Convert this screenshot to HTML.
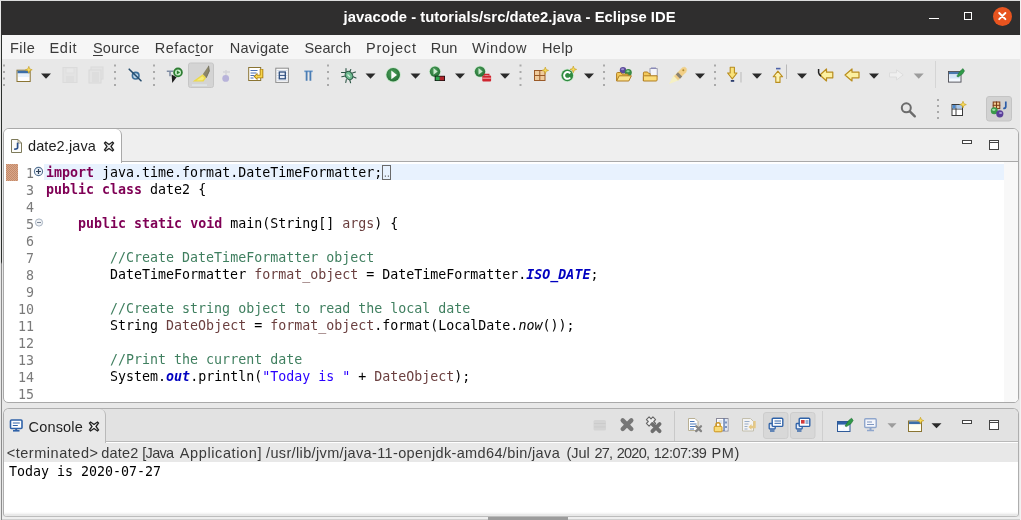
<!DOCTYPE html>
<html><head><meta charset="utf-8"><title>javacode - tutorials/src/date2.java - Eclipse IDE</title>
<style>
*{box-sizing:border-box;margin:0;padding:0}
html,body{width:1021px;height:520px;overflow:hidden;background:#e8e8e8;-webkit-font-smoothing:antialiased;font-family:"Liberation Sans","DejaVu Sans",sans-serif;}
#root{position:absolute;left:0;top:0;width:1021px;height:520px;will-change:transform}
.abs{position:absolute}
#title{position:absolute;left:1px;top:1px;width:1019px;height:34px;background:#2f2e2e;color:#fff;font-weight:bold;font-size:14.8px;text-align:center;line-height:33px;white-space:nowrap}
#title span{position:absolute;left:342.500px;top:0;letter-spacing:.03px}
#lefte{position:absolute;left:1px;top:35px;width:1px;height:485px;background:linear-gradient(#2c302d 0,#2c302d 227px,#8c8c8c 229px,#8c8c8c 100%)}
#righte{position:absolute;left:1020px;top:0;width:1px;height:520px;background:#f2f2f2}
#tope{position:absolute;left:0;top:0;width:1021px;height:1px;background:#dcdcdc}
#menu{position:absolute;left:2px;top:35px;width:1018px;height:24px;background:#f6f6f6;font-size:14.5px;color:#3a3a3a;}
#menu span{position:absolute;top:1px;line-height:25px;white-space:nowrap}
u{text-decoration:underline;text-underline-offset:2px;text-decoration-thickness:1px}
.mono{font-family:"DejaVu Sans Mono","Liberation Mono",monospace;font-size:13.31px;white-space:pre}
#edpanel{position:absolute;left:3px;top:128px;width:1016px;height:275px;background:#fff;border:1px solid #a9a9a9;border-radius:6px 6px 5px 5px;overflow:hidden}
#edhead{position:absolute;left:0;top:0;width:100%;height:33px;background:#efefef;border-bottom:1px solid #a9a9a9}
#edtab{position:absolute;left:0px;top:0px;width:118px;height:34px;background:#fff;border-right:1px solid #a9a9a9;border-radius:5px 6px 0 0;font-size:14.5px;color:#1e1e1e}
.ln{position:absolute;left:0;width:1000px;height:17px;line-height:17px}
.ln .n{position:absolute;left:0;top:.6px;width:30px;text-align:right;color:#7a7a7a}
.ln .c{position:absolute;left:42px;color:#000}
.k{color:#7f0055;font-weight:bold}
.cm{color:#3f7f5f}
.v{color:#6a3e3e}
.s{color:#2a00ff}
.sf{color:#0000c0;font-weight:bold;font-style:italic}
.i{font-style:italic}
#conpanel{position:absolute;left:3px;top:408px;width:1016px;height:109px;background:#fff;border:1px solid #aeaeae;border-bottom-color:#bcbcbc;border-radius:6px 6px 4px 4px;overflow:hidden}
#conhead{position:absolute;left:0;top:0;width:100%;height:33px;background:#e2e2e2;border-bottom:1px solid #b9b9b9}
#contab{position:absolute;left:0;top:0;width:102px;height:34px;background:#e8e8e8;border-right:1px solid #b9b9b9;border-radius:5px 6px 0 0;font-size:14.5px;color:#1e1e1e}
#condesc{position:absolute;left:0;top:34px;width:100%;height:19px;background:#e8e8e8;font-size:14.5px;color:#3a3a3a;line-height:19px;white-space:nowrap}
#condesc span{position:absolute;top:1px;white-space:pre}
#icons{position:absolute;left:0;top:0;width:1021px;height:520px;pointer-events:none}
</style></head><body><div id="root">
<div id="tope"></div>
<div id="title"><span>javacode - tutorials/src/date2.java - Eclipse IDE</span></div>
<div class="abs" style="left:929px;top:17.500px;width:9.500px;height:1.500px;background:#fff"></div>
<div class="abs" style="left:963.700px;top:11.700px;width:8.600px;height:8.600px;border:1.500px solid #fff"></div>
<div class="abs" style="left:992.800px;top:6.600px;width:19px;height:19px;border-radius:10px;background:#e8541f"></div>
<div id="lefte"></div><div id="righte"></div>
<div id="menu">
<span style="left:8px;letter-spacing:.5px">File</span><span style="left:47.500px;letter-spacing:.7px">Edit</span><span style="left:91px;letter-spacing:.1px"><u>S</u>ource</span><span style="left:152.700px;letter-spacing:.55px">Refac<u>t</u>or</span><span style="left:227.700px;letter-spacing:.3px">Navigate</span><span style="left:302.500px;letter-spacing:.1px">Search</span><span style="left:364px;letter-spacing:.8px">Project</span><span style="left:428.700px">Run</span><span style="left:470px;letter-spacing:.6px">Window</span><span style="left:540px;letter-spacing:.3px">Help</span>
</div>
<div id="edpanel">
 <div id="edhead"></div>
 <div id="edtab"><span class="abs" style="left:24px;top:8.500px;letter-spacing:.1px">date2.java</span></div>
 <div id="code" class="mono" style="position:absolute;left:0;top:33px;width:100%;height:243px">
  <div class="abs" style="left:1000px;top:0;width:14px;height:243px;background:#f8f8f8"></div>
  <div class="abs" style="left:14px;top:2px;width:986px;height:16px;background:#e8f2fe"></div>
  <div class="abs" style="left:14px;top:2px;width:26px;height:17px;background:#fff"></div>
  <div class="ln" style="top:2px"><span class="n">1</span><span class="c"><span class="k">import</span> java.time.format.DateTimeFormatter;</span></div>
  <div class="ln" style="top:19px"><span class="n">3</span><span class="c"><span class="k">public</span> <span class="k">class</span> date2 {</span></div>
  <div class="ln" style="top:36px"><span class="n">4</span></div>
  <div class="ln" style="top:53px"><span class="n">5</span><span class="c">    <span class="k">public</span> <span class="k">static</span> <span class="k">void</span> main(String[] <span class="v">args</span>) {</span></div>
  <div class="ln" style="top:70px"><span class="n">6</span></div>
  <div class="ln" style="top:87px"><span class="n">7</span><span class="c">        <span class="cm">//Create DateTimeFormatter object</span></span></div>
  <div class="ln" style="top:104px"><span class="n">8</span><span class="c">        DateTimeFormatter <span class="v">format_object</span> = DateTimeFormatter.<span class="sf">ISO_DATE</span>;</span></div>
  <div class="ln" style="top:121px"><span class="n">9</span></div>
  <div class="ln" style="top:138px"><span class="n">10</span><span class="c">        <span class="cm">//Create string object to read the local date</span></span></div>
  <div class="ln" style="top:155px"><span class="n">11</span><span class="c">        String <span class="v">DateObject</span> = <span class="v">format_object</span>.format(LocalDate.<span class="i">now</span>());</span></div>
  <div class="ln" style="top:172px"><span class="n">12</span></div>
  <div class="ln" style="top:189px"><span class="n">13</span><span class="c">        <span class="cm">//Print the current date</span></span></div>
  <div class="ln" style="top:206px"><span class="n">14</span><span class="c">        System.<span class="sf">out</span>.println(<span class="s">"Today is "</span> + <span class="v">DateObject</span>);</span></div>
  <div class="ln" style="top:223px"><span class="n">15</span></div>
 </div>
</div>
<div id="conpanel">
 <div id="conhead"></div>
 <div id="contab"><span class="abs" style="left:24.600px;top:9.500px;letter-spacing:.15px">Console</span></div>
 <div id="condesc"><span style="left:2.7px;letter-spacing:0.53px">&lt;terminated&gt; </span><span style="left:97.2px;letter-spacing:0.24px">date2 </span><span style="left:138.3px;letter-spacing:-0.72px">[Java </span><span style="left:175.8px;letter-spacing:0.61px">Application] </span><span style="left:262.0px;letter-spacing:0.36px">/usr/lib/jvm/java-11-openjdk-amd64/bin/java </span><span style="left:562.5px;letter-spacing:-0.01px">(Jul </span><span style="left:590.4px;letter-spacing:-0.76px">27, </span><span style="left:612.7px;letter-spacing:-0.74px">2020, </span><span style="left:649.7px;letter-spacing:-0.47px">12:07:39 </span><span style="left:707.4px;letter-spacing:0.62px">PM)</span></div>
 <div class="abs" style="left:0;top:105px;width:100%;height:2px;background:#e9e9e9"></div>
 <div class="abs" style="left:0;top:103px;width:100%;height:2px;background:linear-gradient(#fff,#f2f2f2)"></div>
 <div class="mono abs" style="left:5px;top:54px;line-height:17px;color:#000">Today is 2020-07-27</div>
</div>
<div class="abs" style="left:2px;top:517px;width:1018px;height:2px;background:#eeeeee"></div><div class="abs" style="left:2px;top:519px;width:1018px;height:1px;background:#cfcfcf"></div>
<div class="abs" style="left:488px;top:517px;width:80px;height:3px;background:#9c9c9c"></div>
<svg id="icons" viewBox="0 0 1021 520" width="1021" height="520">
<path d="M999.200 13l6.200 6.200M1005.400 13l-6.200 6.200" stroke="#fff" stroke-width="1.900" stroke-linecap="round"/>
<defs><radialGradient id="gg" cx=".45" cy=".4" r=".6"><stop offset="0" stop-color="#4fa45e"/><stop offset="1" stop-color="#256f35"/></radialGradient></defs>
<rect x="3" y="64.5" width="2" height="2" fill="#a9a9a9"/><rect x="3" y="71" width="2" height="2" fill="#a9a9a9"/><rect x="3" y="77.5" width="2" height="2" fill="#a9a9a9"/><rect x="3" y="84" width="2" height="2" fill="#a9a9a9"/>
<rect x="17" y="70.2" width="13.2" height="11.3" fill="#fdfdfd" stroke="#8a7433" stroke-width="1"/>
<rect x="17.5" y="70.7" width="12.2" height="2.6" fill="#3a6ea8"/>
<rect x="18" y="74" width="11" height="3" fill="#dbe9f8" opacity=".7"/>
<polygon points="28.80,66.40 29.72,68.88 32.20,69.80 29.72,70.72 28.80,73.20 27.88,70.72 25.40,69.80 27.88,68.88" fill="#f8dc5a" stroke="#c9a227" stroke-width="0.7"/>
<path d="M41.0 73.5h10l-5.0 5.2z" fill="#2a2a2a"/>
<g opacity=".55"><rect x="63" y="67.5" width="14" height="15" fill="#dedede" stroke="#cfcfcf"/><rect x="66" y="68" width="8" height="5" fill="#e6e6e6" stroke="#d0d0d0" stroke-width=".6"/><rect x="66" y="76" width="8" height="6" fill="#d6d6d6"/></g>
<g opacity=".55"><rect x="91" y="67" width="12" height="12" fill="#dedede" stroke="#cfcfcf"/><rect x="89" y="70" width="12" height="13" fill="#dedede" stroke="#cccccc"/><rect x="92" y="72" width="7" height="10" fill="#d4d4d4"/></g>
<rect x="114" y="64.5" width="2" height="2" fill="#a9a9a9"/><rect x="114" y="71" width="2" height="2" fill="#a9a9a9"/><rect x="114" y="77.5" width="2" height="2" fill="#a9a9a9"/><rect x="114" y="84" width="2" height="2" fill="#a9a9a9"/>
<circle cx="135.7" cy="75.7" r="3.3" fill="#b9d5ea" stroke="#3b6f99" stroke-width="1.6"/>
<path d="M129.2 69.2L141 80.8" stroke="#274e6e" stroke-width="1.6" stroke-linecap="round"/>
<rect x="153" y="64.5" width="2" height="2" fill="#a9a9a9"/><rect x="153" y="71" width="2" height="2" fill="#a9a9a9"/><rect x="153" y="77.5" width="2" height="2" fill="#a9a9a9"/><rect x="153" y="84" width="2" height="2" fill="#a9a9a9"/>
<path d="M166.8 71.3h6.5M170 71.3v5" stroke="#7f8ca3" stroke-width="1.6" fill="none"/>
<path d="M171.6 74.5L172.2 83L176.6 77.2z" fill="#1d1d1d"/>
<circle cx="178" cy="72.4" r="3.9" fill="#c9efc9" stroke="#2e7d32" stroke-width="1.8"/>
<path d="M176.8 70.3l3.3 2.1l-3.3 2.1z" fill="#2e7d32"/>
<rect x="188.5" y="63" width="25" height="24.5" rx="2" fill="#d4d4d4" stroke="#c6c6c6"/>
<path d="M208.600 65.800L202.800 74.200L206.200 77.800L209.300 71z" fill="#8b8668"/>
<path d="M202.800 74.200L192.600 81.600L203.500 81.400L206.200 77.800z" fill="#ecd94a"/>
<path d="M202.300 76.300L196.500 80.600L202.500 80.300L204.300 78z" fill="#f7ec7a"/>
<path d="M208.600 65.800L209.300 71L206.200 77.800" stroke="#6d6a58" stroke-width=".9" fill="none"/>
<rect x="192" y="84.200" width="15" height="1.800" fill="#dfe6ea" opacity=".8"/>
<circle cx="225.7" cy="78.4" r="3.4" fill="#b8b3da"/>
<path d="M223 72h7M226 70v5" stroke="#d4d4d8" stroke-width="1.5"/>
<rect x="248.7" y="67.5" width="12" height="13" fill="#fff" stroke="#8a7433"/>
<path d="M250.5 70.5h7M250.5 73h6M250.5 75.5h4M250.5 78h3" stroke="#4a6fb3" stroke-width="1.2"/>
<path d="M261.5 69v7.5h-5" stroke="#a97c12" stroke-width="3.6" fill="none"/><path d="M257.5 72.8L253.5 76.5L257.5 80.2z" fill="#a97c12"/>
<path d="M261.5 69.6v6.9h-5" stroke="#f7d54a" stroke-width="1.8" fill="none"/><path d="M257 74.4L254.8 76.5L257 78.6z" fill="#f7d54a"/>
<rect x="275.8" y="68.2" width="12.6" height="14.2" fill="#fbfbfb" stroke="#8c8c8c"/>
<path d="M276.5 70.5h11M276.5 73h11M276.5 75.5h11M276.5 78h11M276.5 80.3h11" stroke="#c9d3e2" stroke-width=".8"/>
<rect x="279.3" y="72" width="6" height="6.8" fill="#e8eef8" stroke="#2f4f7f" stroke-width="1.3"/><path d="M279.5 75.4h5.6" stroke="#2f4f7f" stroke-width="1"/>
<path d="M304.300 71.300h8.400" stroke="#6f9ccc" stroke-width="1.700"/><path d="M306.600 71v9.800M310.400 71v9.800" stroke="#4b7db4" stroke-width="1.800"/>
<rect x="327" y="64.5" width="2" height="2" fill="#a9a9a9"/><rect x="327" y="71" width="2" height="2" fill="#a9a9a9"/><rect x="327" y="77.5" width="2" height="2" fill="#a9a9a9"/><rect x="327" y="84" width="2" height="2" fill="#a9a9a9"/>
<g stroke="#2b5444" stroke-width="1.100" stroke-linecap="round"><path d="M346 68.5v4M350.8 69.5l-1.5 3M341.5 72.5h4M341.8 76.8l3.5-.8M352.5 73l3-1M352.5 76.5l3.5 1.5M346.3 79.5l-.5 3M349.8 80l.8 2.8"/></g>
<ellipse cx="349" cy="75.5" rx="3.5" ry="4.4" transform="rotate(-35 349 75.5)" fill="#6fba90" stroke="#2a5a44" stroke-width="1.100"/>
<path d="M347.5 74.5l2.5 2.5" stroke="#d4f0dd" stroke-width="1.2"/>
<path d="M365.5 73.5h10l-5.0 5.2z" fill="#2a2a2a"/>
<circle cx="393.2" cy="74.8" r="7.6" fill="#c4e6c8"/><circle cx="393.200" cy="74.800" r="6.800" fill="url(#gg)"/>
<path d="M391.300 70.600L397 74.900L391.300 79.200z" fill="#fbfbfb"/>
<path d="M410.5 73.5h10l-5.0 5.2z" fill="#2a2a2a"/>
<circle cx="435" cy="71.6" r="5.9" fill="#c4e6c8"/><circle cx="435" cy="71.6" r="5.200" fill="url(#gg)"/><path d="M433.5 68l4.200 3.400l-4.200 3.400z" fill="#d8f0da" opacity=".9"/>
<rect x="434.7" y="75.8" width="10.3" height="5.2" fill="#111"/><rect x="435.6" y="76.5" width="4.2" height="3.8" fill="#2fa84f"/><rect x="439.8" y="76.5" width="4.4" height="3.8" fill="#b0262b"/>
<path d="M455.0 73.5h10l-5.0 5.2z" fill="#2a2a2a"/>
<circle cx="480" cy="71.6" r="5.9" fill="#c4e6c8"/><circle cx="480" cy="71.6" r="5.200" fill="url(#gg)"/><path d="M478.5 68l4.200 3.400l-4.200 3.400z" fill="#d8f0da" opacity=".9"/>
<rect x="482.3" y="75.4" width="8.8" height="6" rx="1" fill="#cf2630"/><path d="M484.5 75.5v-1.2h4.4v1.2" stroke="#cf2630" stroke-width="1.2" fill="none"/><path d="M482.5 78.2h8.4" stroke="#f3b0b0" stroke-width="1"/>
<path d="M500.0 73.5h10l-5.0 5.2z" fill="#2a2a2a"/>
<rect x="519.5" y="64.5" width="2" height="2" fill="#a9a9a9"/><rect x="519.5" y="71" width="2" height="2" fill="#a9a9a9"/><rect x="519.5" y="77.5" width="2" height="2" fill="#a9a9a9"/><rect x="519.5" y="84" width="2" height="2" fill="#a9a9a9"/>
<rect x="534.5" y="70.5" width="10.5" height="10" fill="#efcb9c" stroke="#9a5a28" stroke-width="1"/><path d="M539.800 70.500v10M534.500 75.500h10.500" stroke="#9a5a28" stroke-width="1"/>
<polygon points="545.30,67.10 546.15,69.55 548.60,70.40 546.15,71.25 545.30,73.70 544.45,71.25 542.00,70.40 544.45,69.55" fill="#f8dc5a" stroke="#c9a227" stroke-width="0.7"/>
<circle cx="567.3" cy="75.4" r="6.6" fill="#c4e6c8"/><circle cx="567.3" cy="75.4" r="5.8" fill="#2f8a40"/><path d="M570.2 73.3a3.4 3.4 0 1 0 0 4.2" stroke="#fff" stroke-width="2" fill="none"/>
<polygon points="573.30,66.10 574.15,68.55 576.60,69.40 574.15,70.25 573.30,72.70 572.45,70.25 570.00,69.40 572.45,68.55" fill="#f8dc5a" stroke="#c9a227" stroke-width="0.7"/>
<path d="M584.0 73.5h10l-5.0 5.2z" fill="#2a2a2a"/>
<rect x="603" y="64.5" width="2" height="2" fill="#a9a9a9"/><rect x="603" y="71" width="2" height="2" fill="#a9a9a9"/><rect x="603" y="77.5" width="2" height="2" fill="#a9a9a9"/><rect x="603" y="84" width="2" height="2" fill="#a9a9a9"/>
<circle cx="623" cy="70.2" r="3.2" fill="#5b4a9a"/><circle cx="628.3" cy="72.4" r="3.5" fill="#3c8a46"/><ellipse cx="622.6" cy="69.2" rx="1.6" ry="1" fill="#9d90d0"/><ellipse cx="628" cy="71.3" rx="1.7" ry="1" fill="#8fd09a"/>
<path d="M616.6 81v-7.5q0-1 1-1h3.2l1.2 1.6h6v2" fill="#f3c95a" stroke="#b07d22" stroke-width="1"/><path d="M616.6 81l2.6-5.2h12.2l-2.6 5.2z" fill="#fbe28c" stroke="#b07d22" stroke-width="1" stroke-linejoin="round"/>
<rect x="650" y="68.6" width="7.2" height="7.5" fill="#f4f4f8" stroke="#8a8aa0" stroke-width=".8"/><path d="M651 68.2h5" stroke="#8888b8" stroke-width="1.4"/>
<path d="M643.4 81v-8q0-1 1-1h3.2l1.2 1.6h1.4v2.6" fill="#f3c95a" stroke="#b07d22" stroke-width="1"/><path d="M643.4 81l0-4.4q0-.8 .8-.8h12.9v4.2q0 1-1 1z" fill="#fbdc78" stroke="#b07d22" stroke-width="1" stroke-linejoin="round"/>
<path d="M669 84L674 74.5L679.5 80z" fill="#f6f1c0" opacity=".9"/>
<path d="M674.2 76.2L682 67.8q2.6-1.6 4.2 .2q1.400 1.8-.2 4.200L678 80.200z" fill="#f2cf86" stroke="#e8d9a8" stroke-width=".6"/>
<path d="M675.8 74.6l4.200 4.200l2.200-2.300l-4.200-4.200z" fill="#8a8272"/>
<circle cx="683.3" cy="70.3" r="1" fill="#b08a30"/>
<path d="M695.0 73.5h10l-5.0 5.2z" fill="#2a2a2a"/>
<rect x="714" y="64.5" width="2" height="2" fill="#a9a9a9"/><rect x="714" y="71" width="2" height="2" fill="#a9a9a9"/><rect x="714" y="77.5" width="2" height="2" fill="#a9a9a9"/><rect x="714" y="84" width="2" height="2" fill="#a9a9a9"/>
<path d="M741 72v10.500" stroke="#b9b9b9" stroke-width="1"/>
<path d="M730.200 67.200h4.200v5.800h2.600l-4.700 5.800l-4.700-5.800h2.600z" fill="#f9e27a" stroke="#b98d1e" stroke-width="1.100" stroke-linejoin="round"/>
<rect x="730.800" y="80" width="3.400" height="1.800" fill="#2c3e6e"/>
<path d="M752.0 73.5h10l-5.0 5.2z" fill="#2a2a2a"/>
<path d="M786.500 64.500v14.500" stroke="#b9b9b9" stroke-width="1"/>
<rect x="776" y="67.800" width="4.500" height="1.600" fill="#4e63a8"/>
<path d="M775.800 82.400h4.200v-5.600h2.600l-4.700-5.600l-4.700 5.600h2.600z" fill="#fdf3b0" stroke="#b98d1e" stroke-width="1.100" stroke-linejoin="round"/>
<path d="M797.0 73.5h10l-5.0 5.2z" fill="#2a2a2a"/>
<path d="M832.800 72.200v5.600h-6.300v3.200l-6.600-6l6.600-6v3.200z" fill="#fcf0a0" stroke="#b98d1e" stroke-width="1.200" stroke-linejoin="round"/>
<path d="M818.600 69v3.600q.5 2.500 2.500 3.500" stroke="#222" stroke-width="1.500" fill="none"/>
<path d="M859 72.200v5.600h-7v3.200l-7-6l7-6v3.200z" fill="#fcf0a0" stroke="#b98d1e" stroke-width="1.200" stroke-linejoin="round"/>
<path d="M869.0 73.5h10l-5.0 5.2z" fill="#2a2a2a"/>
<path d="M889.500 72.800v4.200h7v3l6.800-5.100l-6.800-5.100v3z" fill="#efefef" stroke="#dcdcdc" stroke-width="1" stroke-linejoin="round"/>
<path d="M913.7 73.5h10l-5.0 5.2z" fill="#9c9c9c"/>
<path d="M935.500 61v27" stroke="#d5d5d5" stroke-width="1"/>
<rect x="948.500" y="71.500" width="12.500" height="10.600" fill="#f4f9ff" stroke="#4a4a52" stroke-width=".9"/><rect x="949" y="72" width="11.500" height="2.200" fill="#4a7ab0"/><rect x="949.500" y="75" width="10.500" height="3.500" fill="#d4e6f8"/>
<path d="M956.800 76.200l3.200-5l3-2.600l1.500 2.300l-2 3.200l-4.400 2.900z" fill="#2f9a48" stroke="#1f6a30" stroke-width=".5"/>
<circle cx="906.300" cy="107.800" r="4.500" fill="none" stroke="#6c6c6c" stroke-width="2"/><path d="M909.800 111.300l5 5" stroke="#6c6c6c" stroke-width="2.400" stroke-linecap="round"/>
<rect x="937" y="99" width="2" height="2" fill="#a9a9a9"/><rect x="937" y="105" width="2" height="2" fill="#a9a9a9"/><rect x="937" y="111" width="2" height="2" fill="#a9a9a9"/><rect x="937" y="117" width="2" height="2" fill="#a9a9a9"/>
<rect x="952" y="104.500" width="10.500" height="11" fill="#fff" stroke="#3a3a3a" stroke-width="1"/><path d="M956 104.500v11M952 109h10.500" stroke="#3a3a3a" stroke-width="1"/><rect x="952.500" y="105" width="3" height="3.500" fill="#4a8ad0"/><rect x="956.500" y="105" width="5.500" height="3.500" fill="#a8c8ee"/>
<polygon points="963.00,101.30 963.92,103.68 966.30,104.60 963.92,105.52 963.00,107.90 962.08,105.52 959.70,104.60 962.08,103.68" fill="#f8dc5a" stroke="#c9a227" stroke-width="0.7"/>
<rect x="986.500" y="96.500" width="25" height="24.500" rx="2.500" fill="#d2d2d2" stroke="#c4c4c4"/>
<rect x="993.200" y="102" width="6.600" height="6.600" fill="#f0c890" stroke="#7a3a14" stroke-width="1"/><path d="M996.500 101.500v7.500M992.800 105.300h7.400" stroke="#7a3a14" stroke-width="1"/>
<path d="M1005.800 101.500v5q0 2-2.600 2" stroke="#2b5ca8" stroke-width="1.700" fill="none"/>
<circle cx="994.300" cy="110.800" r="3.500" fill="#3a9a4a"/><ellipse cx="993.800" cy="109.800" rx="1.800" ry="1.100" fill="#9fe0a8"/>
<circle cx="999.800" cy="113.800" r="3.600" fill="#5a3f98"/><ellipse cx="1000.600" cy="113" rx="1.600" ry="1" fill="#a898d8"/>
<path d="M11.500 139.500h6.500l3.500 3.500v9.500h-10z" fill="#fcfcfa" stroke="#7d7a5a" stroke-width="1"/><path d="M18 139.500v3.500h3.500" fill="none" stroke="#7d7a5a" stroke-width=".8"/>
<path d="M17.600 142.800v4.600q0 2-3.400 1.800" stroke="#2a4f8a" stroke-width="1.700" fill="none"/>
<g transform="translate(104.5 141.5)"><path d="M1 0.500L4.500 3L8 0.500L9 1.500L6.500 5L9 8.500L8 9.500L4.500 7L1 9.500L0 8.500L2.500 5L0 1.500z" fill="#f4f4f4" stroke="#222" stroke-width="1.300" stroke-linejoin="miter"/></g>
<rect x="962.500" y="140.5" width="9" height="3" fill="#fff" stroke="#444" stroke-width="1"/><rect x="989.500" y="140.5" width="9" height="9" fill="#fff" stroke="#444" stroke-width="1"/><path d="M989.500 142.5h9" stroke="#444" stroke-width="1"/>
<rect x="6" y="164" width="12" height="17" fill="#d9a78a"/>
<defs><pattern id="dt" width="2" height="2" patternUnits="userSpaceOnUse"><rect width="1" height="1" fill="#c48a6a"/><rect x="1" y="1" width="1" height="1" fill="#c48a6a"/></pattern></defs><rect x="6" y="164" width="12" height="17" fill="url(#dt)"/>
<circle cx="38.500" cy="171.500" r="4.100" fill="#eef4fb" stroke="#5a7696" stroke-width="1.100"/><path d="M36 171.500h5M38.500 169v5" stroke="#2c3e55" stroke-width="1.200"/>
<circle cx="39" cy="222.500" r="3.600" fill="#f0f2f5" stroke="#a9b4c2" stroke-width="1"/><path d="M37 222.500h4" stroke="#7a8696" stroke-width="1"/>
<rect x="382.500" y="165.500" width="8" height="14" fill="none" stroke="#6a6a6a" stroke-width="1"/><path d="M384.800 176.200h1.200M387.800 176.200h1.200" stroke="#666" stroke-width="1.200"/>
<rect x="10.500" y="420" width="11.500" height="8.500" rx="1" fill="#fff" stroke="#2f62a8" stroke-width="1.600"/><path d="M12.800 423h7M12.800 425.500h5" stroke="#2f62a8" stroke-width="1"/><path d="M13 430.800h6.500" stroke="#2f62a8" stroke-width="1.600"/><path d="M16.200 429v1.500" stroke="#2f62a8" stroke-width="2"/>
<g transform="translate(89.5 421.5)"><path d="M1 0.500L4.500 3L8 0.500L9 1.500L6.500 5L9 8.500L8 9.500L4.500 7L1 9.500L0 8.500L2.500 5L0 1.500z" fill="#f4f4f4" stroke="#222" stroke-width="1.300" stroke-linejoin="miter"/></g>
<rect x="593.500" y="420" width="12.500" height="10.500" rx="1.500" fill="#d4d4d4"/><path d="M594 423.500h11.500M594 427h11.500" stroke="#cbcbcb" stroke-width="1"/>
<path d="M622.7 420.4L631.3 429.0M631.3 420.4L622.7 429.0" stroke="#777" stroke-width="4.4" stroke-linecap="round"/>
<g transform="translate(651 421.5) rotate(45)"><path d="M-4.6 -1.9H-1.9V-4.6H1.9V-1.9H4.6V1.9H1.9V4.6H-1.9V1.9H-4.6z" fill="#f0f0f0" stroke="#666" stroke-width="1.100" stroke-linejoin="round"/></g>
<path d="M652.4 424.0L659.6 431.20000000000005M659.6 424.0L652.4 431.20000000000005" stroke="#6e6e6e" stroke-width="3.8" stroke-linecap="round"/>
<path d="M674.500 411v30" stroke="#c9c9c9" stroke-width="1"/>
<path d="M688.500 418.500h6.500l3 3v9h-9.500z" fill="#fff" stroke="#b9b094" stroke-width="1"/><path d="M690 421.500h4.500M690 424h6.500M690 426.500h6.500M690 429h4" stroke="#4a78b8" stroke-width="1.100"/>
<path d="M696.2 426.3L701.0 431.09999999999997M701.0 426.3L696.2 431.09999999999997" stroke="#858585" stroke-width="2.3" stroke-linecap="round"/>
<rect x="716.500" y="418.500" width="11.500" height="12.500" fill="#fff" stroke="#8a8a9a" stroke-width="1"/><rect x="724" y="419" width="3.500" height="11.500" fill="#dfe8f6"/><path d="M724 418.500v12.500" stroke="#3a5a9a" stroke-width="1.100"/><path d="M718.500 421h4M718.500 423h4" stroke="#b8c6dc" stroke-width="1"/><path d="M726 421.500v2M726 426v2" stroke="#3a5a9a" stroke-width="1.200"/>
<path d="M716 426.500v-1.700a2.100 2.100 0 0 1 4.200 0v1.700" stroke="#d0961c" stroke-width="1.400" fill="none"/><rect x="714.200" y="426.300" width="7.800" height="5.500" rx=".8" fill="#f8dc78" stroke="#d0961c" stroke-width="1"/>
<g opacity=".6"><path d="M742.500 418.500h8l3 3v9.500h-11z" fill="#fff" stroke="#b0a88a" stroke-width="1"/><path d="M744.500 421.500h5M744.500 424h4M744.500 426.500h3M744.500 429h3" stroke="#6a8ab8" stroke-width="1.100"/><path d="M754.500 421v6h-4" stroke="#e8b84a" stroke-width="2.400" fill="none"/><path d="M751.500 424l-3 3l3 3z" fill="#e8b84a"/></g>
<rect x="763.500" y="412.500" width="24.500" height="26" rx="2.500" fill="#d8d8d8" stroke="#cdcdcd"/>
<g transform="translate(768.5 417.5)"><rect x="0.700" y="6" width="6" height="5.500" rx=".8" fill="#e8eef8" stroke="#2f62a8" stroke-width="1.300"/><path d="M1.500 13.500h4.500" stroke="#2f62a8" stroke-width="1.400"/><rect x="3.700" y="0.700" width="10.600" height="8.200" rx="1" fill="#fff" stroke="#2f62a8" stroke-width="1.400"/><path d="M6 3.500h6.500M6 5.800h6.500" stroke="#2f62a8" stroke-width="1"/></g>
<rect x="790.500" y="412.500" width="24.500" height="26" rx="2.500" fill="#d8d8d8" stroke="#cdcdcd"/>
<g transform="translate(795.5 417.5)"><rect x="0.700" y="6" width="6" height="5.500" rx=".8" fill="#e8eef8" stroke="#2f62a8" stroke-width="1.300"/><path d="M1.500 13.500h4.500" stroke="#2f62a8" stroke-width="1.400"/><rect x="3.700" y="0.700" width="10.600" height="8.200" rx="1" fill="#fff" stroke="#2f62a8" stroke-width="1.400"/><rect x="5.500" y="2.500" width="3.600" height="3.600" fill="#d43a3a"/><path d="M10 3.500h3M10 5.500h3" stroke="#2f62a8" stroke-width="1"/></g>
<path d="M822.500 411v30" stroke="#cfcfcf" stroke-width="1"/>
<rect x="837.500" y="421.500" width="12.500" height="10" fill="#f4f9ff" stroke="#2f5a98" stroke-width="1"/><rect x="838" y="422" width="11.500" height="2.600" fill="#2f62a8"/><rect x="839.500" y="426.500" width="3.500" height="3" fill="#fff"/><rect x="844.500" y="426.500" width="3.500" height="3" fill="#fff"/>
<path d="M845 426l3.600-5.400l3-2.400l1.500 2.200l-2 3.200l-4.600 3z" fill="#2f9a48" stroke="#1f6a30" stroke-width=".6"/>
<rect x="864.700" y="418.700" width="11.500" height="8.800" rx="1" fill="#f4f6fb" stroke="#8fa6cc" stroke-width="1.400"/><path d="M867 422h5M867 424.500h7" stroke="#7f96c0" stroke-width="1"/><path d="M867 430.500h7" stroke="#8fa6cc" stroke-width="1.500"/><path d="M870.500 428v2" stroke="#8fa6cc" stroke-width="2"/>
<path d="M887.5 423.3h9l-4.5 4.8z" fill="#9c9c9c"/>
<rect x="908.500" y="421" width="13" height="10.500" fill="#fffef2" stroke="#8a7433" stroke-width="1"/><rect x="909" y="421.500" width="12" height="2.600" fill="#3a6ea8"/>
<polygon points="920.50,417.30 921.42,419.68 923.80,420.60 921.42,421.52 920.50,423.90 919.58,421.52 917.20,420.60 919.58,419.68" fill="#f8dc5a" stroke="#c9a227" stroke-width="0.7"/>
<path d="M931.5 423.3h10l-5.0 5z" fill="#2a2a2a"/>
<rect x="962.500" y="420.5" width="9" height="3" fill="#fff" stroke="#444" stroke-width="1"/><rect x="989.500" y="420.5" width="9" height="9" fill="#fff" stroke="#444" stroke-width="1"/><path d="M989.500 422.5h9" stroke="#444" stroke-width="1"/>
</svg>
</div></body></html>
